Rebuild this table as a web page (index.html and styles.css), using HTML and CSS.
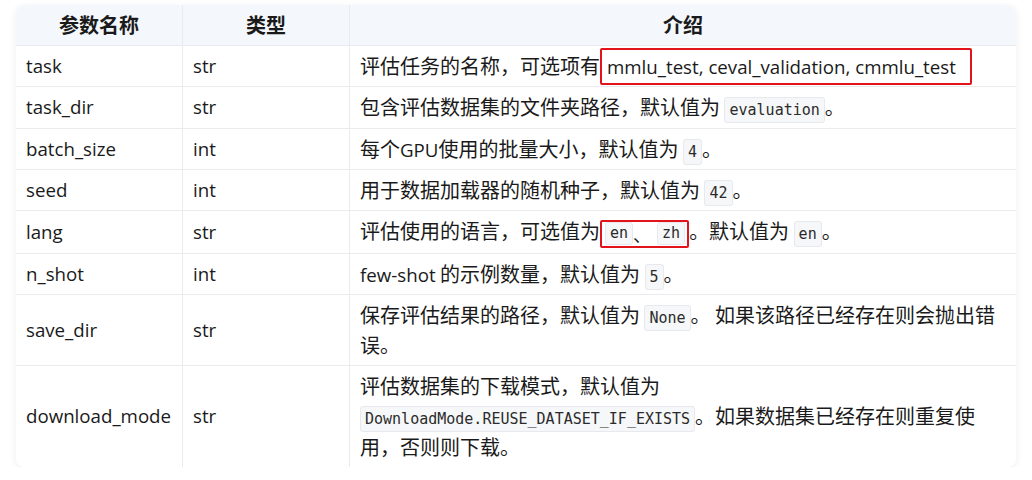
FILE: index.html
```html
<!DOCTYPE html>
<html lang="zh">
<head>
<meta charset="utf-8">
<link rel="stylesheet" href="styles.css">
</head>
<body>
<div class="page">
  <table class="params">
    <colgroup>
      <col class="c1"><col class="c2"><col class="c3">
    </colgroup>
    <thead>
      <tr><th>参数名称</th><th>类型</th><th>介绍</th></tr>
    </thead>
    <tbody>
      <tr><td>task</td><td>str</td><td>评估任务的名称，可选项有<span class="hl hl-task lat">mmlu_test, ceval_validation, cmmlu_test</span></td></tr>
      <tr><td>task_dir</td><td>str</td><td>包含评估数据集的文件夹路径，默认值为 <code>evaluation</code>。</td></tr>
      <tr><td>batch_size</td><td>int</td><td>每个<span class="lat">GPU</span>使用的批量大小，默认值为 <code>4</code>。</td></tr>
      <tr><td>seed</td><td>int</td><td>用于数据加载器的随机种子，默认值为 <code>42</code>。</td></tr>
      <tr><td>lang</td><td>str</td><td>评估使用的语言，可选值为<span class="hl hl-lang"><code>en</code><span class="sep">、</span><code>zh</code></span>。默认值为 <code>en</code>。</td></tr>
      <tr><td>n_shot</td><td>int</td><td><span class="lat">few-shot</span> 的示例数量，默认值为 <code>5</code>。</td></tr>
      <tr><td>save_dir</td><td>str</td><td>保存评估结果的路径，默认值为 <code>None</code>。 如果该路径已经存在则会抛出错误。</td></tr>
      <tr><td>download_mode</td><td>str</td><td>评估数据集的下载模式，默认值为 <code>DownloadMode.REUSE_DATASET_IF_EXISTS</code>。如果数据集已经存在则重复使用，否则则下载。</td></tr>
    </tbody>
  </table>
</div>
</body>
</html>
```
FILE: styles.css
```css
html, body {
  margin: 0;
  padding: 0;
  background: #ffffff;
}
.page {
  padding: 5px 16px 0 16px;
}
.params {
  width: 1000px;
  table-layout: fixed;
  border-collapse: separate;
  border-spacing: 0;
  border-radius: 8px;
  overflow: hidden;
  box-shadow: 0 2px 8px rgba(0, 0, 0, 0.07);
  font-family: "Noto Sans CJK SC", sans-serif;
  font-size: 20px;
  color: #1a1a1a;
}
.c1 { width: 167px; }
.c2 { width: 167px; }
.c3 { width: 666px; }
.params th,
.params td {
  padding: 5px 10px 5px 10px;
  line-height: 30.2px;
  border-bottom: 1px solid #ebebef;
  border-right: 1px solid #ebebef;
  vertical-align: middle;
  text-align: left;
}
.params th:last-child,
.params td:last-child {
  border-right: none;
}
.params tbody tr:last-child td {
  border-bottom: none;
}
.params th {
  background: #f4f7fb;
  font-weight: 700;
  text-align: center;
}
.params td:nth-child(1),
.params td:nth-child(2) {
  font-family: "Open Sans", "Noto Sans CJK SC", sans-serif;
  font-size: 18.7px;
}
.lat {
  font-family: "Open Sans", "Noto Sans CJK SC", sans-serif;
  font-size: 18.7px;
  line-height: 1;
}
.params code {
  font-family: "DejaVu Sans Mono", monospace;
  font-size: 15px;
  line-height: 1;
  background: #f6f7f9;
  border: 1px solid #e8e9ee;
  border-radius: 3px;
  padding: 3px 4px;
  color: #2b2b2b;
}
.hl {
  border: 2px solid #e3131b;
  border-radius: 2px;
  white-space: nowrap;
  line-height: 1;
}
.hl-task {
  padding: 4px 14px 4px 5px;
}
.hl-lang {
  display: inline-flex;
  align-items: center;
  vertical-align: middle;
  height: 24px;
  padding: 0 2px 0 3px;
}
.hl-lang code {
  padding: 3px 4px;
}
.hl-lang .sep {
  font-size: 18px;
  line-height: 1;
  margin-right: 6px;
}
```
